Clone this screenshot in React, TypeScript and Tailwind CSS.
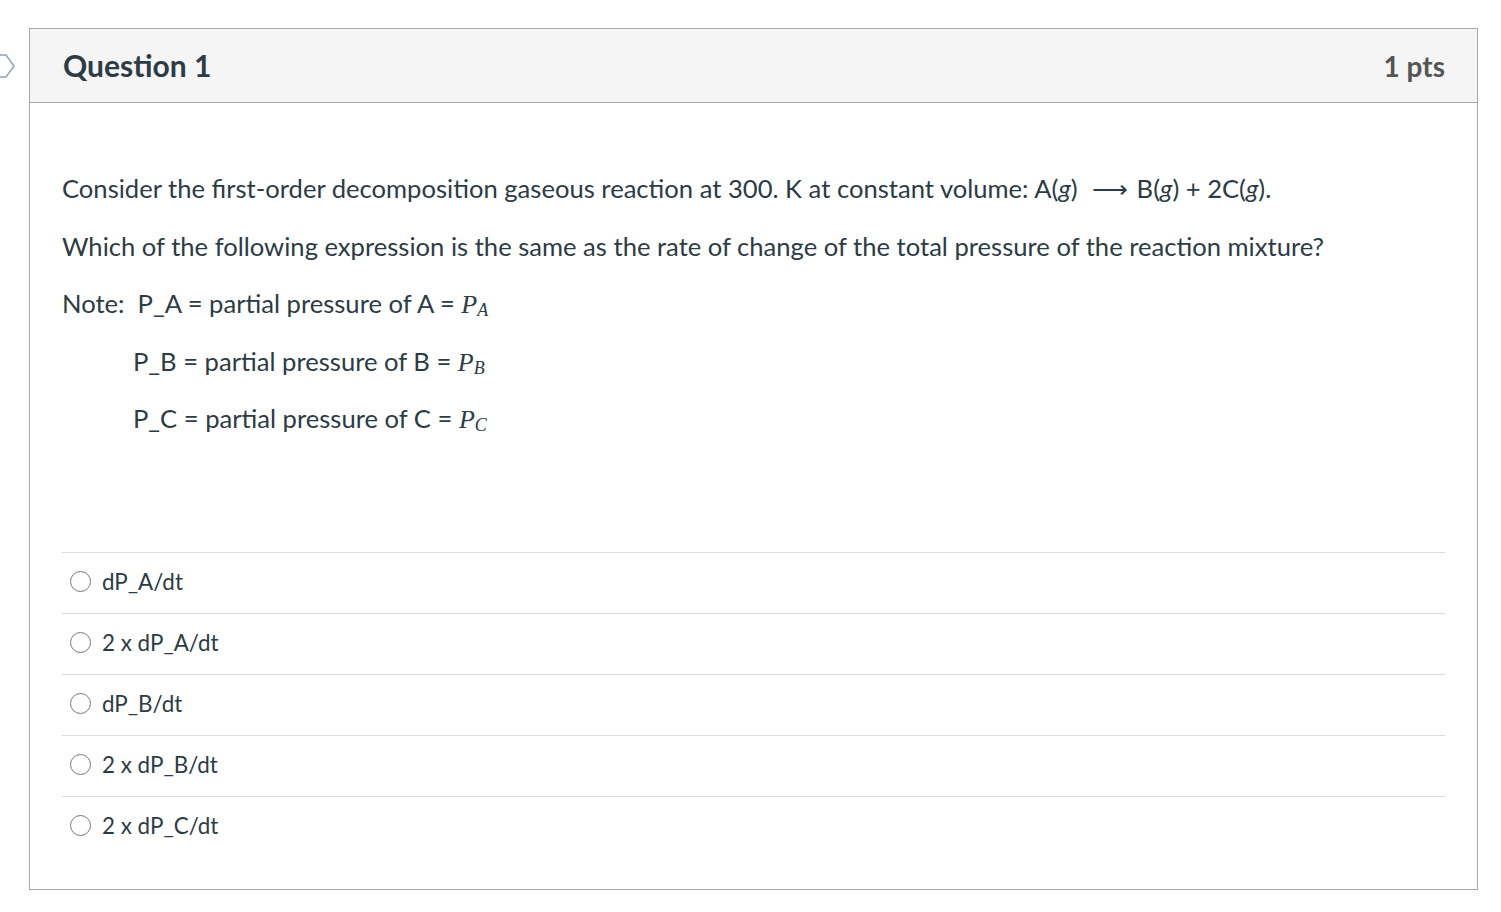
import React from "react";

const answers = ["dP_A/dt", "2 x dP_A/dt", "dP_B/dt", "2 x dP_B/dt", "2 x dP_C/dt"];

function MathP({ sub }: { sub: string }) {
  return (
    <span className="font-['Liberation_Serif',serif] italic text-[26px] leading-none">
      P<sub className="text-[18px] leading-none relative top-[3px] align-baseline">{sub}</sub>
    </span>
  );
}

export default function App() {
  return (
    <div className="w-[1501px] h-[912px] bg-white relative font-['Lato',sans-serif] text-[#2d3b45]">
      {/* left pointer */}
      <svg className="absolute left-0 top-[54px]" width="16" height="24" viewBox="0 0 16 24">
        <path d="M0 1 H6 L14 12 L6 23 H0" fill="none" stroke="#8fa3b3" strokeWidth="1.5" />
      </svg>
      <div className="pt-[28px] pl-[29px] w-[1478px]">
        <div className="border border-[#a8a8a8]">
          <div className="h-[74px] bg-[#f5f5f5] border-b border-[#a8a8a8] flex items-center justify-between pl-[33px] pr-[32px]">
            <span className="text-[30px] font-bold">Question 1</span>
            <span className="text-[28px] font-bold text-[#555]">1 pts</span>
          </div>
          <div className="pt-[67px] px-[32px] pb-[32px] text-[25.6px] leading-[36px]">
            <p className="mb-[21.5px]">
              Consider the first-order decomposition gaseous reaction at 300. K at constant volume: A(<i>g</i>)
              <span className="font-['Liberation_Serif',serif] text-[25px] leading-none ml-[14px] mr-[9px]">⟶</span>B(<i>g</i>) + 2C(<i>g</i>).
            </p>
            <p className="mb-[21.5px]">
              Which of the following expression is the same as the rate of change of the total pressure of the reaction mixture?
            </p>
            <p className="mb-[21.5px]">
              Note:&nbsp; P_A = partial pressure of A = <MathP sub="A" />
            </p>
            <p className="mb-[21.5px] pl-[71px]">
              P_B = partial pressure of B = <MathP sub="B" />
            </p>
            <p className="pl-[71px]">
              P_C = partial pressure of C = <MathP sub="C" />
            </p>
            <div className="mt-[116px]">
              {answers.map((a) => (
                <div key={a} className="h-[61px] pb-[3px] border-t border-[#dcdcdc] flex items-center pl-[8px] text-[22.4px]">
                  <span className="w-[21px] h-[21px] rounded-full border-[1.5px] border-[#777] mr-[11px]" />
                  {a}
                </div>
              ))}
            </div>
          </div>
        </div>
      </div>
    </div>
  );
}
